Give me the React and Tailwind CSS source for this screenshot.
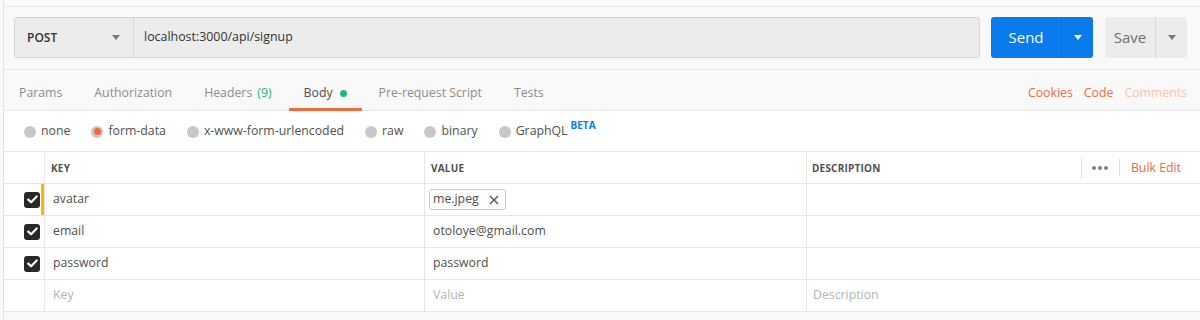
const font = { fontFamily: '"Open Sans", "Liberation Sans", sans-serif' }

function Caret({ className }) {
  return (
    <svg width="8" height="5" viewBox="0 0 8 5" className={className}>
      <path d="M0 0 L8 0 L4 5 Z" fill="currentColor" />
    </svg>
  )
}

function Check() {
  return (
    <div className="w-[16px] h-[16px] rounded-[3px] bg-[#282828] flex items-center justify-center">
      <svg width="11" height="9" viewBox="0 0 11 9">
        <path d="M1.3 4.6 L4.1 7.3 L9.7 1.5" stroke="#fff" strokeWidth="2.2" fill="none" strokeLinecap="round" strokeLinejoin="round" />
      </svg>
    </div>
  )
}

function Radio({ label, checked, children }) {
  return (
    <div className="flex items-center gap-[5px]">
      <div className="w-[12px] h-[12px] rounded-full bg-[#c8c8c8] flex items-center justify-center">
        {checked && <div className="w-[7px] h-[7px] rounded-full bg-[#f26b3a]" />}
      </div>
      <span className="text-[12.3px] text-[#505050]">{label}</span>
      {children}
    </div>
  )
}

const tabs = [
  { label: 'Params' },
  { label: 'Authorization' },
  { label: 'Headers', count: '(9)' },
  { label: 'Body', active: true },
  { label: 'Pre-request Script' },
  { label: 'Tests' },
]

const rows = [
  { key: 'avatar', file: 'me.jpeg', editing: true },
  { key: 'email', value: 'otoloye@gmail.com' },
  { key: 'password', value: 'password' },
]

export default function App() {
  return (
    <div style={font} className="w-[1200px] h-[320px] bg-[#f9f9f9] flex overflow-hidden">
      <div className="w-[3px]" />
      <div className="flex-1 flex flex-col border-l border-[#e2e2e2]">
        <div className="h-[7px] border-b border-[#e6e6e6]" />

        {/* request bar */}
        <div className="flex items-center pl-[10px] pr-[13px] pt-[10px] pb-[11px] border-b border-[#e6e6e6]">
          <div className="flex-1 h-[41px] flex bg-[#ececec] border border-[#d6d6d6] rounded-[3px]">
            <div className="w-[119px] flex items-center justify-between pl-[12px] pr-[13px] border-r border-[#d6d6d6]">
              <span className="text-[12px] font-semibold text-[#333]">POST</span>
              <Caret className="text-[#777]" />
            </div>
            <div className="flex items-center pl-[10px] text-[12.4px] text-[#333]">localhost:3000/api/signup</div>
          </div>
          <div className="ml-[11px] h-[41px] flex bg-[#097bed] rounded-[3px] text-white">
            <div className="w-[71px] flex items-center justify-center text-[15px] font-medium border-r border-[#0a6fd6]">Send</div>
            <div className="w-[31px] flex items-center justify-center">
              <Caret className="text-white" />
            </div>
          </div>
          <div className="ml-[12px] h-[41px] flex bg-[#ececec] rounded-[3px] text-[#707070]">
            <div className="w-[51px] flex items-center justify-center text-[15px] border-r border-[#d6d6d6]">Save</div>
            <div className="w-[31px] flex items-center justify-center">
              <Caret className="text-[#777]" />
            </div>
          </div>
        </div>

        {/* tabs */}
        <div className="h-[41px] flex items-stretch border-b border-[#e6e6e6] pr-[13px]">
          <div className="flex gap-[2px]">
            {tabs.map((t) => (
              <div key={t.label} className="relative flex items-center px-[15px] pt-[7px] text-[12.3px]">
                <span className={t.active ? 'text-[#505050]' : 'text-[#8c8c8c]'}>{t.label}</span>
                {t.count && <span className="ml-[5px] text-[#26b47f]">{t.count}</span>}
                {t.active && <span className="ml-[7px] w-[7px] h-[7px] rounded-full bg-[#26b47f]" />}
                {t.active && <div className="absolute left-0 right-0 bottom-[-1px] h-[3px] bg-[#f26b3a]" />}
              </div>
            ))}
          </div>
          <div className="ml-auto flex items-center pt-[7px] gap-[11px] text-[12.3px]">
            <span className="text-[#f26b3a]">Cookies</span>
            <span className="text-[#f26b3a]">Code</span>
            <span className="text-[#f9c3ae]">Comments</span>
          </div>
        </div>

        <div className="bg-white">
          {/* body type */}
          <div className="h-[41px] flex items-center gap-[21px] pl-[20px] pt-[1px] border-b border-[#e6e6e6]">
            <Radio label="none" />
            <Radio label="form-data" checked />
            <Radio label="x-www-form-urlencoded" />
            <Radio label="raw" />
            <Radio label="binary" />
            <Radio label="GraphQL">
              <span className="self-start -mt-[4px] -ml-[2px] text-[10px] font-bold text-[#097bed]">BETA</span>
            </Radio>
          </div>

          {/* table header */}
          <div className="h-[32px] flex border-b border-[#e6e6e6] text-[10px] tracking-[0.2px] font-bold text-[#505050]">
            <div className="w-[41px] border-r border-[#e6e6e6]" />
            <div className="w-[380px] border-r border-[#e6e6e6] flex items-center pl-[6px] pt-[1px]">KEY</div>
            <div className="w-[382px] border-r border-[#e6e6e6] flex items-center pl-[6px] pt-[1px]">VALUE</div>
            <div className="flex-1 flex items-center pl-[5px]">
              <span className="pt-[1px]">DESCRIPTION</span>
              <div className="ml-auto flex items-center h-full">
                <div className="h-[22px] border-l border-[#e0e0e0]" />
                <div className="w-[37px] flex items-center justify-center gap-[2px]">
                  <span className="w-[4px] h-[4px] rounded-full bg-[#808080]" />
                  <span className="w-[4px] h-[4px] rounded-full bg-[#808080]" />
                  <span className="w-[4px] h-[4px] rounded-full bg-[#808080]" />
                </div>
                <div className="h-[17px] border-l border-[#e0e0e0]" />
                <span className="pl-[11px] pr-[19px] pt-[1px] text-[12.3px] tracking-normal font-normal text-[#f26b3a]">Bulk Edit</span>
              </div>
            </div>
          </div>

          {/* rows */}
          {rows.map((r) => (
            <div key={r.key} className="h-[32px] flex border-b border-[#e6e6e6] text-[12.3px] text-[#505050]">
              <div className="relative w-[41px] border-r border-[#e6e6e6] flex items-center justify-end pr-[4px]">
                <Check />
                {r.editing && <div className="absolute right-0 top-0 bottom-0 w-[3px] bg-[#ffb400]" />}
              </div>
              <div className="w-[380px] border-r border-[#e6e6e6] flex items-center pl-[8px]">{r.key}</div>
              <div className="w-[382px] border-r border-[#e6e6e6] flex items-center pl-[8px]">
                {r.file ? (
                  <div className="-ml-[4px] h-[21px] flex items-center pl-[3px] pr-[6px] border border-[#c8c8c8] rounded-[3px]">
                    <span>{r.file}</span>
                    <svg width="10" height="10" viewBox="0 0 10 10" className="ml-[10px]">
                      <path d="M1 1 L9 9 M9 1 L1 9" stroke="#505050" strokeWidth="1.3" />
                    </svg>
                  </div>
                ) : (
                  r.value
                )}
              </div>
              <div className="flex-1" />
            </div>
          ))}
          <div className="h-[32px] flex border-b border-[#e6e6e6] text-[12.3px] text-[#b4b4b4]">
            <div className="w-[41px] border-r border-[#e6e6e6]" />
            <div className="w-[380px] border-r border-[#e6e6e6] flex items-center pl-[8px]">Key</div>
            <div className="w-[382px] border-r border-[#e6e6e6] flex items-center pl-[8px]">Value</div>
            <div className="flex-1 flex items-center pl-[6px]">Description</div>
          </div>
        </div>
      </div>
    </div>
  )
}
